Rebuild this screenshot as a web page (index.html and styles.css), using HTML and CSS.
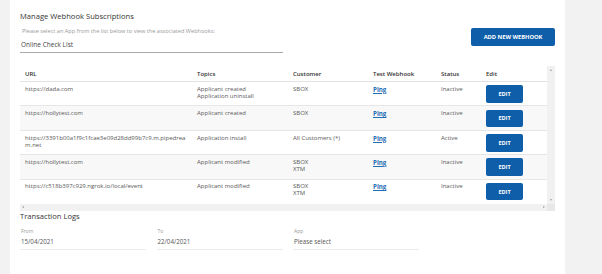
FILE: index.html
```html
<!DOCTYPE html>
<html>
<head>
<meta charset="utf-8">
<link rel="stylesheet" href="styles.css">
</head>
<body>
<div class="page">
  <div class="gutter"></div>
  <main class="panel">
    <section class="top">
      <div class="app-select">
        <h1 class="title">Manage Webhook Subscriptions</h1>
        <div class="hint">Please select an App from the list below to view the associated Webhooks:</div>
        <div class="select">Online Check List</div>
      </div>
      <button class="btn-add">ADD NEW WEBHOOK</button>
    </section>

    <section class="grid-wrap">
      <div class="grid-main">
        <div class="grid">
          <div class="row head">
            <div class="c url">URL</div>
            <div class="c topics">Topics</div>
            <div class="c cust">Customer</div>
            <div class="c test">Test Webhook</div>
            <div class="c status">Status</div>
            <div class="c edit">Edit</div>
          </div>
          <div class="row">
            <div class="c url">https://dada.com</div>
            <div class="c topics">Applicant created<br>Application uninstall</div>
            <div class="c cust">SBOX</div>
            <div class="c test"><a class="ping">Ping</a></div>
            <div class="c status">Inactive</div>
            <div class="c edit"><button class="btn-edit">EDIT</button></div>
          </div>
          <div class="row alt">
            <div class="c url">https://hollytest.com</div>
            <div class="c topics">Applicant created</div>
            <div class="c cust">SBOX</div>
            <div class="c test"><a class="ping">Ping</a></div>
            <div class="c status">Inactive</div>
            <div class="c edit"><button class="btn-edit">EDIT</button></div>
          </div>
          <div class="row">
            <div class="c url">https://3391b00a1f9c1fcae3e09d28dd99b7c9.m.pipedrea<br>m.net</div>
            <div class="c topics">Application install</div>
            <div class="c cust">All Customers (*)</div>
            <div class="c test"><a class="ping">Ping</a></div>
            <div class="c status">Active</div>
            <div class="c edit"><button class="btn-edit">EDIT</button></div>
          </div>
          <div class="row alt">
            <div class="c url">https://hollytest.com</div>
            <div class="c topics">Applicant modified</div>
            <div class="c cust">SBOX<br>XTM</div>
            <div class="c test"><a class="ping">Ping</a></div>
            <div class="c status">Inactive</div>
            <div class="c edit"><button class="btn-edit">EDIT</button></div>
          </div>
          <div class="row last">
            <div class="c url">https://c518b397c929.ngrok.io/local/event</div>
            <div class="c topics">Applicant modified</div>
            <div class="c cust">SBOX<br>XTM</div>
            <div class="c test"><a class="ping">Ping</a></div>
            <div class="c status">Inactive</div>
            <div class="c edit"><button class="btn-edit">EDIT</button></div>
          </div>
        </div>
        <div class="vscroll">
          <span class="arr up"></span>
          <span class="arr down"></span>
        </div>
      </div>
      <div class="hscroll">
        <span class="arr left"></span>
        <span class="arr right"></span>
        <span class="corner"></span>
      </div>
    </section>

    <section class="logs">
      <h2 class="subtitle">Transaction Logs</h2>
      <div class="fields">
        <div class="field">
          <div class="flabel">From</div>
          <div class="fvalue">15/04/2021</div>
        </div>
        <div class="field">
          <div class="flabel">To</div>
          <div class="fvalue">22/04/2021</div>
        </div>
        <div class="field">
          <div class="flabel">App</div>
          <div class="fvalue">Please select</div>
        </div>
      </div>
    </section>
  </main>
  <div class="side"></div>
</div>
</body>
</html>
```

FILE: styles.css
```css
* { box-sizing: border-box; }
html, body { margin: 0; padding: 0; }
body {
  font-family: "Open Sans", "Noto Sans", sans-serif;
  background: #f2f2f2;
  color: #555;
}
.page {
  display: flex;
  width: 602px;
  height: 274px;
  overflow: hidden;
}
.gutter { width: 10px; flex: none; background: #f2f2f2; }
.side { flex: 1; background: #f2f2f2; }
.panel {
  width: 555px;
  flex: none;
  background: #fff;
  padding: 0 10px;
}

/* top */
.top {
  display: flex;
  justify-content: space-between;
  align-items: flex-start;
  height: 65px;
}
.app-select { width: 263px; padding-top: 9.5px; }
.title {
  margin: 0;
  font-size: 7.6px;
  line-height: 12px;
  font-weight: 400;
  color: #333;
}
.hint {
  margin-top: 6.5px;
  font-size: 5.6px;
  line-height: 7px;
  color: #999;
  padding-left: 2px;
}
.select {
  margin-top: 5px;
  font-size: 6.5px;
  line-height: 10px;
  color: #444;
  padding-left: 1px;
  padding-bottom: 1.5px;
  border-bottom: 1.5px solid #a8a8a8;
}
.btn-add {
  margin-top: 28px;
  width: 84px;
  height: 17.5px;
  border: none;
  border-radius: 2px;
  background: #0e5ea9;
  color: #fff;
  font-family: "Open Sans", sans-serif;
  font-weight: 700;
  font-size: 5.8px;
  letter-spacing: -0.05px;
  padding: 0;
}

/* grid */
.grid-wrap { width: 535px; }
.grid-main { display: flex; }
.grid { width: 527px; }
.row {
  display: flex;
  height: 24.4px;
  border-bottom: 1px solid #e6e6e6;
  background: #fff;
}
.row.alt { background: #f8f8f8; }
.row.last { border-bottom: none; }
.row.head {
  height: 17px;
  border-bottom: 1px solid #e2e2e2;
}
.c {
  font-size: 6px;
  line-height: 7px;
  padding: 3.8px 0 0 5px;
  color: #585858;
  white-space: nowrap;
}
.head .c {
  padding-top: 5.6px;
  font-weight: 600;
  color: #333;
}
.url { width: 172px; }
.topics { width: 96px; }
.cust { width: 80px; }
.test { width: 68px; }
.status { width: 45px; }
.edit { width: 66px; }
.row .edit { padding-top: 3.3px; }
.head .edit { padding-top: 5.6px; }
.ping {
  color: #1f6db3;
  font-weight: 700;
  text-decoration: underline;
  font-size: 6.2px;
}
.btn-edit {
  width: 37px;
  height: 17.5px;
  border: none;
  border-radius: 2px;
  background: #0e5ea9;
  color: #fff;
  font-family: "Open Sans", sans-serif;
  font-weight: 700;
  font-size: 5.5px;
  padding: 0;
}

/* fake scrollbars */
.vscroll {
  width: 8px;
  margin-top: 1px;
  background: #f1f1f1;
  display: flex;
  flex-direction: column;
  justify-content: space-between;
  align-items: center;
  padding: 3px 0;
}
.hscroll {
  height: 7px;
  background: #f1f1f1;
  display: flex;
  align-items: center;
  padding-left: 2px;
}
.hscroll .corner {
  width: 8px;
  height: 7px;
  background: #e8e8e8;
  margin-left: 2px;
}
.arr { width: 0; height: 0; display: block; }
.arr.up { border-left: 1.5px solid transparent; border-right: 1.5px solid transparent; border-bottom: 2px solid #a0a0a0; }
.arr.down { border-left: 1.5px solid transparent; border-right: 1.5px solid transparent; border-top: 2px solid #a0a0a0; }
.arr.left { border-top: 1.5px solid transparent; border-bottom: 1.5px solid transparent; border-right: 2px solid #a0a0a0; }
.arr.right { border-top: 1.5px solid transparent; border-bottom: 1.5px solid transparent; border-left: 2px solid #a0a0a0; margin-left: auto; }

/* logs */
.subtitle {
  margin: 0;
  font-size: 7.6px;
  line-height: 10px;
  font-weight: 400;
  color: #333;
}
.fields {
  display: flex;
  gap: 10.5px;
  margin-top: 7.5px;
}
.field { width: 126px; }
.flabel {
  font-size: 5px;
  line-height: 6px;
  color: #999;
  padding-left: 1px;
}
.fvalue {
  margin-top: 4px;
  font-size: 6.2px;
  line-height: 8px;
  color: #555;
  padding-left: 1px;
  padding-bottom: 3px;
  border-bottom: 1px solid #ececec;
}
```
